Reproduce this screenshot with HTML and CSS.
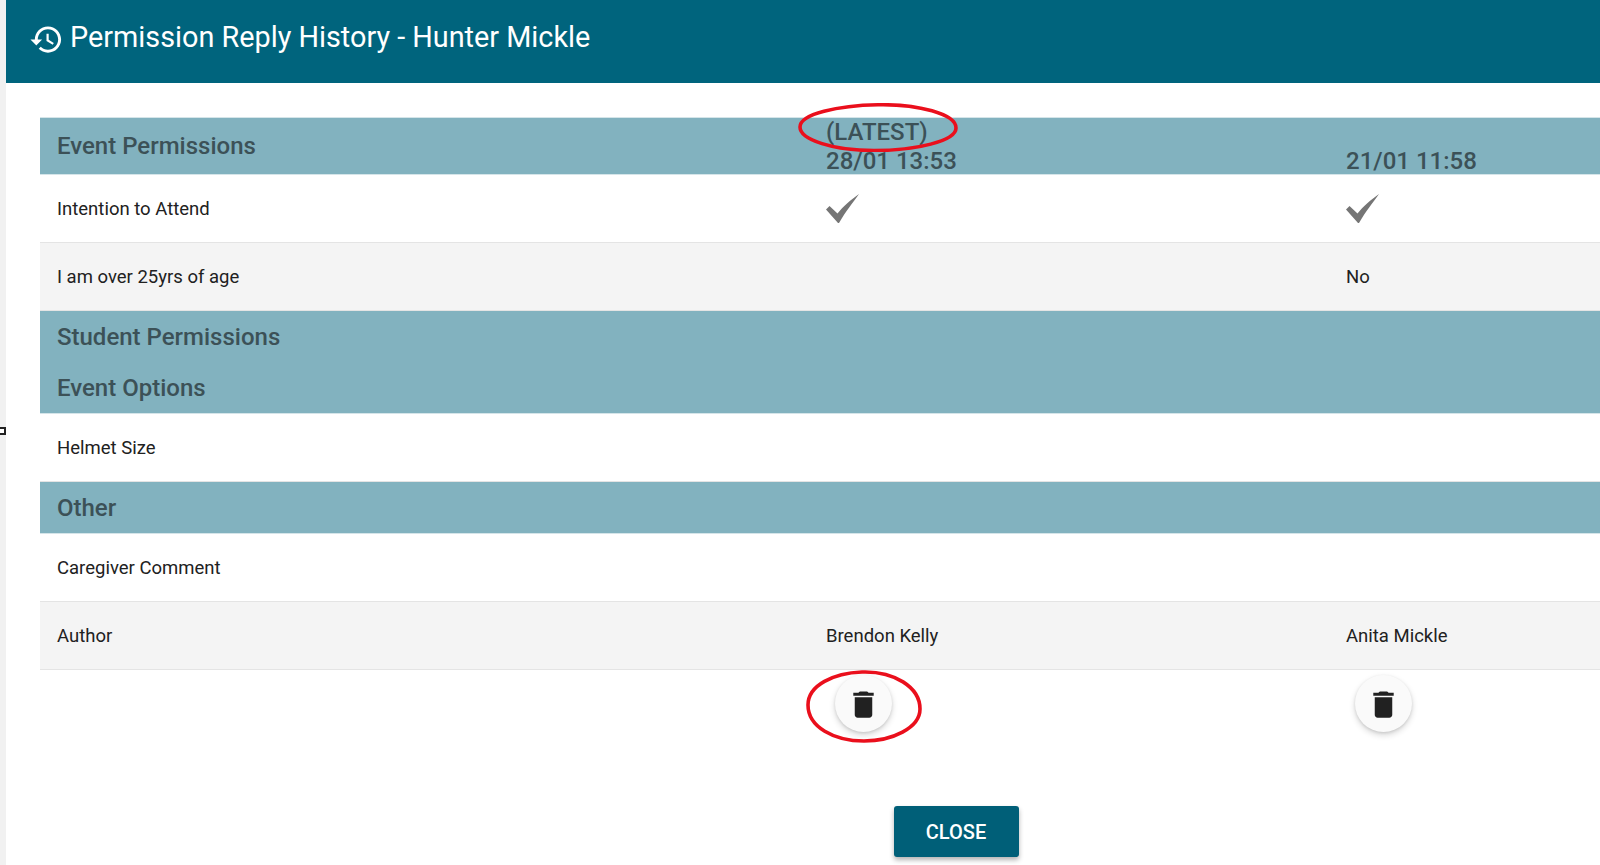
FILE: index.html
```html
<!DOCTYPE html>
<html lang="en">
<head>
    <meta charset="UTF-8">
    <title>Permission Reply History - Hunter Mickle</title>
    <link rel="stylesheet" href="styles.css">
</head>
<body>
    <div class="backdrop"><span class="backdrop-handle"></span></div>

    <div class="dialog">
        <header class="dialog-title">
            <svg class="history-icon" viewBox="0 0 24 24" fill="currentColor">
                <path d="M13 3c-4.97 0-9 4.03-9 9H1l3.89 3.89.07.14L9 12H6c0-3.87 3.13-7 7-7s7 3.13 7 7-3.13 7-7 7c-1.93 0-3.68-.79-4.94-2.06l-1.42 1.42C8.27 19.99 10.51 21 13 21c4.97 0 9-4.03 9-9s-4.03-9-9-9zm-1 5v5l4.28 2.54.72-1.21-3.5-2.08V8H12z"/>
            </svg>
            <h1>Permission Reply History - Hunter Mickle</h1>
        </header>

        <table class="history-table">
            <colgroup>
                <col class="col-label">
                <col class="col-reply">
                <col class="col-reply">
            </colgroup>
            <tr class="section section-head">
                <th>Event Permissions</th>
                <th class="reply-date"><div>(LATEST)<br>28/01 13:53</div></th>
                <th class="reply-date"><div>21/01 11:58</div></th>
            </tr>
            <tr>
                <td>Intention to Attend</td>
                <td><svg class="check-icon" viewBox="0 0 33 29" fill="currentColor"><path d="M0 15.5 3.5 12 11.5 19.5C17 12.5 25 5.5 33 0 27 8.5 20 17 13 29H12Z"/></svg></td>
                <td><svg class="check-icon" viewBox="0 0 33 29" fill="currentColor"><path d="M0 15.5 3.5 12 11.5 19.5C17 12.5 25 5.5 33 0 27 8.5 20 17 13 29H12Z"/></svg></td>
            </tr>
            <tr class="shaded">
                <td>I am over 25yrs of age</td>
                <td></td>
                <td>No</td>
            </tr>
            <tr class="section"><th colspan="3">Student Permissions</th></tr>
            <tr class="section section-end"><th colspan="3">Event Options</th></tr>
            <tr>
                <td>Helmet Size</td>
                <td></td>
                <td></td>
            </tr>
            <tr class="section section-end"><th colspan="3">Other</th></tr>
            <tr>
                <td>Caregiver Comment</td>
                <td></td>
                <td></td>
            </tr>
            <tr class="shaded">
                <td>Author</td>
                <td>Brendon Kelly</td>
                <td>Anita Mickle</td>
            </tr>
            <tr class="actions">
                <td></td>
                <td><button class="delete-btn" aria-label="Delete"><svg viewBox="0 0 24 24" fill="currentColor"><path d="M6 19c0 1.1.9 2 2 2h8c1.1 0 2-.9 2-2V7H6v12zM19 4h-3.5l-1-1h-5l-1 1H5v2h14V4z"/></svg></button></td>
                <td><button class="delete-btn" aria-label="Delete"><svg viewBox="0 0 24 24" fill="currentColor"><path d="M6 19c0 1.1.9 2 2 2h8c1.1 0 2-.9 2-2V7H6v12zM19 4h-3.5l-1-1h-5l-1 1H5v2h14V4z"/></svg></button></td>
            </tr>
        </table>

        <div class="dialog-actions">
            <button class="close-btn">Close</button>
        </div>
    </div>

    <!-- red marks drawn over the screenshot -->
    <svg class="markup markup-latest" viewBox="0 0 160 49" fill="none">
        <path d="M80 1.8C120 1 158 11 158 25 158 38 118 47.5 76 47.5 36 47.5 2 37 2 24 2 11 40 2.5 80 1.8Z"/>
    </svg>
    <svg class="markup markup-delete" viewBox="0 0 116 73" fill="none">
        <path d="M56 2C88 1 114 17 114 39 114 58 86 71 58 71 28 71 2 57 2 35 2 15 28 3 56 2Z"/>
    </svg>
</body>
</html>
```

FILE: styles.css
```css
:root {
    --primary-color: #00647d;
    --section-bg: #82b2bf;
    --section-text: #3c5157;
    --section-line: #d5e5e9;
    --border-color: #e4e4e4;
    --shaded-bg: #f4f4f4;
    --markup-red: #ea0f1c;
}

* {
    margin: 0;
    padding: 0;
    box-sizing: border-box;
    font-family: Roboto, sans-serif;
}

html, body {
    height: 100%;
    overflow: hidden;
}

body {
    display: flex;
    background-color: #fff;
    color: #212121;
}

.backdrop {
    flex: none;
    width: 6px;
    background-color: #f1f1f1;
}

.backdrop-handle {
    position: absolute;
    top: 427px;
    left: -2px;
    width: 8px;
    height: 8px;
    border: 2px solid #222;
    background-color: #fff;
}

.dialog {
    flex: none;
    width: 1900px;
    height: 100%;
}

.dialog-title {
    display: flex;
    align-items: center;
    gap: 6px;
    height: 83px;
    padding: 0 0 9px 23px;
    background-color: var(--primary-color);
    color: #fff;
}

.history-icon {
    width: 35px;
    height: 35px;
    flex: none;
    margin-top: 4px;
}

.dialog-title h1 {
    font-size: 28.8px;
    font-weight: 400;
}

.history-table {
    table-layout: fixed;
    width: 1809px;
    margin: 34px 0 0 34px;
    border-collapse: separate;
    border-spacing: 0;
    font-size: 18.5px;
}

.col-label {
    width: 769px;
}

.col-reply {
    width: 520px;
}

.history-table th,
.history-table td {
    padding: 0 17px;
    text-align: left;
    vertical-align: middle;
}

.history-table td {
    height: 68px;
    border-bottom: 1px solid var(--border-color);
}

.section th {
    height: 51px;
    background-color: var(--section-bg);
    color: var(--section-text);
    font-size: 24px;
    font-weight: 500;
}

.section-end th {
    height: 52px;
    border-bottom: 1px solid var(--section-line);
}

.section-head th {
    height: 58px;
    border-top: 1px solid var(--section-line);
    border-bottom: 1px solid var(--section-line);
}

.section-head .reply-date {
    vertical-align: bottom;
}

/* date line hangs just below the band, as in the app */
.reply-date div {
    line-height: 29px;
    margin-bottom: -2px;
}

.shaded td {
    background-color: var(--shaded-bg);
}

.check-icon {
    display: block;
    width: 33px;
    height: 29px;
    color: #757575;
}

.history-table .actions td {
    height: auto;
    padding-top: 5px;
    border-bottom: none;
    vertical-align: top;
}

.delete-btn {
    display: flex;
    align-items: center;
    justify-content: center;
    width: 57px;
    height: 57px;
    margin-left: 9px;
    border: none;
    border-radius: 50%;
    background-color: #fafafa;
    color: #212121;
    box-shadow: 0 3px 6px rgba(0, 0, 0, 0.16), 0 1px 3px rgba(0, 0, 0, 0.1);
}

.delete-btn svg {
    width: 35px;
    height: 35px;
    margin-top: 2px;
}

.dialog-actions {
    display: flex;
    justify-content: center;
    margin-top: 74px;
}

.close-btn {
    width: 125px;
    height: 51px;
    border: none;
    border-radius: 3px;
    background-color: #005f78;
    color: #fff;
    font-size: 20px;
    font-weight: 500;
    text-transform: uppercase;
    box-shadow: 0 3px 5px rgba(0, 0, 0, 0.3);
}

.markup {
    position: absolute;
    stroke: var(--markup-red);
    stroke-width: 3.6;
}

.markup-latest {
    top: 103px;
    left: 798px;
    width: 160px;
    height: 49px;
}

.markup-delete {
    top: 670px;
    left: 806px;
    width: 116px;
    height: 73px;
}
```
